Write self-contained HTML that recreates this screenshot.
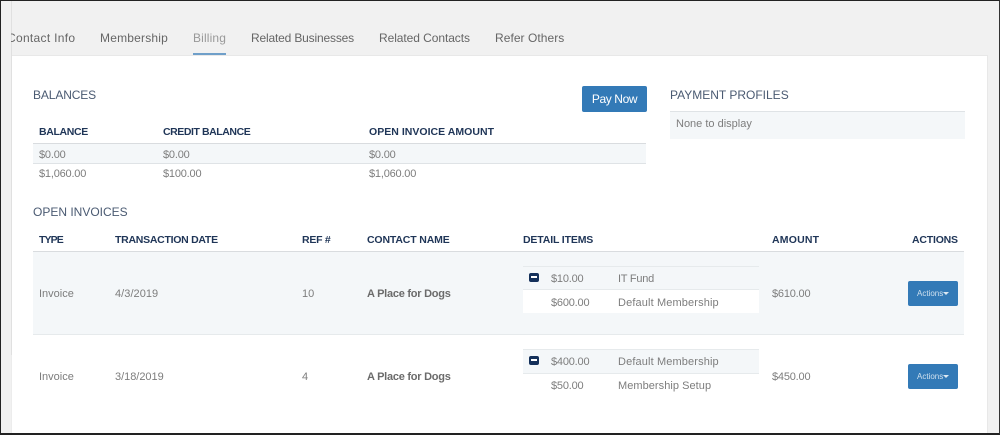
<!DOCTYPE html>
<html><head><meta charset="utf-8">
<style>
html,body{margin:0;padding:0}
body{width:1000px;height:435px;position:relative;overflow:hidden;background:#f1f1f1;font-family:"Liberation Sans",sans-serif;font-size:11px;color:#7d7d7d}
div{position:absolute;box-sizing:border-box}
.t{white-space:nowrap;line-height:14px;height:14px}
.tab{font-size:12px;color:#666;top:31px}
.h{font-size:12px;letter-spacing:0;color:#4a5a72}
.b{font-weight:bold;font-size:10.5px;color:#1f3557}
.c{letter-spacing:-.2px}
.n{font-weight:bold;color:#6b6b6b;letter-spacing:-.25px}
.btn{background:#337ab7;border-radius:2px}
.m{width:10px;height:9px;background:#14305a;border-radius:2px}
.m:after{content:"";position:absolute;left:2px;top:3px;width:6px;height:2px;background:#fff}
</style></head><body>
<div style="left:11px;top:0;width:1px;height:355px;background:#e0e0e0"></div>
<div style="left:11px;top:355px;width:1px;height:80px;background:#ececec"></div>
<div style="left:12px;top:55px;width:976px;height:380px;background:#fff;border-top:1px solid #e8e8e8;border-right:1px solid #e8e8e8"></div>

<div class="t tab" style="left:7px;letter-spacing:.3px">Contact Info</div>
<div style="left:1px;top:20px;width:10px;height:30px;background:#f1f1f1"></div>
<div class="t tab" style="left:100px;letter-spacing:.2px">Membership</div>
<div class="t tab" style="left:193px;color:#999;letter-spacing:.15px">Billing</div>
<div class="t tab" style="left:251px;letter-spacing:-.17px">Related Businesses</div>
<div class="t tab" style="left:379px;letter-spacing:-.07px">Related Contacts</div>
<div class="t tab" style="left:495px;letter-spacing:.05px">Refer Others</div>
<div style="left:193px;top:53px;width:33px;height:2px;background:#6f9fc9"></div>

<div class="t h" style="left:33px;top:88px;letter-spacing:-.12px">BALANCES</div>
<div class="btn" style="left:582px;top:86px;width:65px;height:26px;color:#fff;font-size:12px;letter-spacing:-.4px;line-height:27px;text-align:center">Pay Now</div>
<div class="t h" style="left:670px;top:88px">PAYMENT PROFILES</div>
<div style="left:670px;top:111px;width:295px;height:28px;background:#f4f7f9;border-top:1px solid #dfe3e6"></div>
<div class="t" style="left:676px;top:117px">None to display</div>

<div class="t b" style="left:39px;top:125px;letter-spacing:-.35px">BALANCE</div>
<div class="t b" style="left:163px;top:125px;letter-spacing:-.43px">CREDIT BALANCE</div>
<div class="t b" style="left:369px;top:125px;letter-spacing:.03px">OPEN INVOICE AMOUNT</div>
<div style="left:33px;top:143px;width:613px;height:21px;background:#f4f7f9;border-top:1px solid #d9dcdf;border-bottom:1px solid #dfe3e6"></div>
<div class="t c" style="left:39px;top:148px">$0.00</div>
<div class="t c" style="left:163px;top:148px">$0.00</div>
<div class="t c" style="left:369px;top:148px">$0.00</div>
<div class="t c" style="left:39px;top:167px">$1,060.00</div>
<div class="t c" style="left:163px;top:167px">$100.00</div>
<div class="t c" style="left:369px;top:167px">$1,060.00</div>

<div class="t h" style="left:33px;top:205px">OPEN INVOICES</div>
<div class="t b" style="left:39px;top:233px;letter-spacing:-.9px">TYPE</div>
<div class="t b" style="left:115px;top:233px;letter-spacing:-.27px">TRANSACTION DATE</div>
<div class="t b" style="left:302px;top:233px;letter-spacing:-.25px">REF #</div>
<div class="t b" style="left:367px;top:233px;letter-spacing:-.15px">CONTACT NAME</div>
<div class="t b" style="left:523px;top:233px;letter-spacing:-.15px">DETAIL ITEMS</div>
<div class="t b" style="left:772px;top:233px;letter-spacing:.2px">AMOUNT</div>
<div class="t b" style="left:912px;top:233px;letter-spacing:-.2px">ACTIONS</div>

<div style="left:33px;top:251px;width:931px;height:84px;background:#f4f7f9;border-top:1px solid #d9dcdf;border-bottom:1px solid #e6eaec"></div>
<div class="t" style="left:39px;top:287px">Invoice</div>
<div class="t" style="left:115px;top:287px;letter-spacing:.05px">4/3/2019</div>
<div class="t" style="left:302px;top:287px">10</div>
<div class="t n" style="left:367px;top:287px">A Place for Dogs</div>
<div style="left:523px;top:266px;width:236px;height:24px;background:#f4f7f9;border-top:1px solid #e6eaec;border-bottom:1px solid #e6eaec"></div>
<div style="left:523px;top:290px;width:236px;height:23px;background:#fff"></div>
<div class="m" style="left:529px;top:273px"></div>
<div class="t c" style="left:551px;top:272px">$10.00</div>
<div class="t" style="left:618px;top:272px;letter-spacing:-.25px">IT Fund</div>
<div class="t c" style="left:551px;top:296px">$600.00</div>
<div class="t" style="left:618px;top:296px;letter-spacing:.13px">Default Membership</div>
<div class="t c" style="left:772px;top:287px">$610.00</div>
<div class="btn" style="left:908px;top:281px;width:50px;height:25px;color:#cfe0ee;font-size:8px;line-height:25px;padding-left:9px">Actions<span style="display:inline-block;border:3px solid transparent;border-top-color:#dbe8f2;border-bottom:0;vertical-align:middle"></span></div>

<div class="t" style="left:39px;top:370px">Invoice</div>
<div class="t" style="left:115px;top:370px;letter-spacing:-.03px">3/18/2019</div>
<div class="t" style="left:302px;top:370px">4</div>
<div class="t n" style="left:367px;top:370px">A Place for Dogs</div>
<div style="left:523px;top:349px;width:236px;height:25px;background:#f4f7f9;border-top:1px solid #e6eaec;border-bottom:1px solid #e6eaec"></div>
<div class="m" style="left:529px;top:356px"></div>
<div class="t c" style="left:551px;top:355px">$400.00</div>
<div class="t" style="left:618px;top:355px;letter-spacing:.13px">Default Membership</div>
<div class="t c" style="left:551px;top:379px">$50.00</div>
<div class="t" style="left:618px;top:379px;letter-spacing:.05px">Membership Setup</div>
<div class="t c" style="left:772px;top:370px">$450.00</div>
<div class="btn" style="left:908px;top:364px;width:50px;height:25px;color:#cfe0ee;font-size:8px;line-height:25px;padding-left:9px">Actions<span style="display:inline-block;border:3px solid transparent;border-top-color:#dbe8f2;border-bottom:0;vertical-align:middle"></span></div>

<div style="left:0;top:0;width:1000px;height:435px;border-top:1px solid #222;border-left:1px solid #222;border-right:1px solid #333;border-bottom:2px solid #222;z-index:9"></div>
</body></html>
